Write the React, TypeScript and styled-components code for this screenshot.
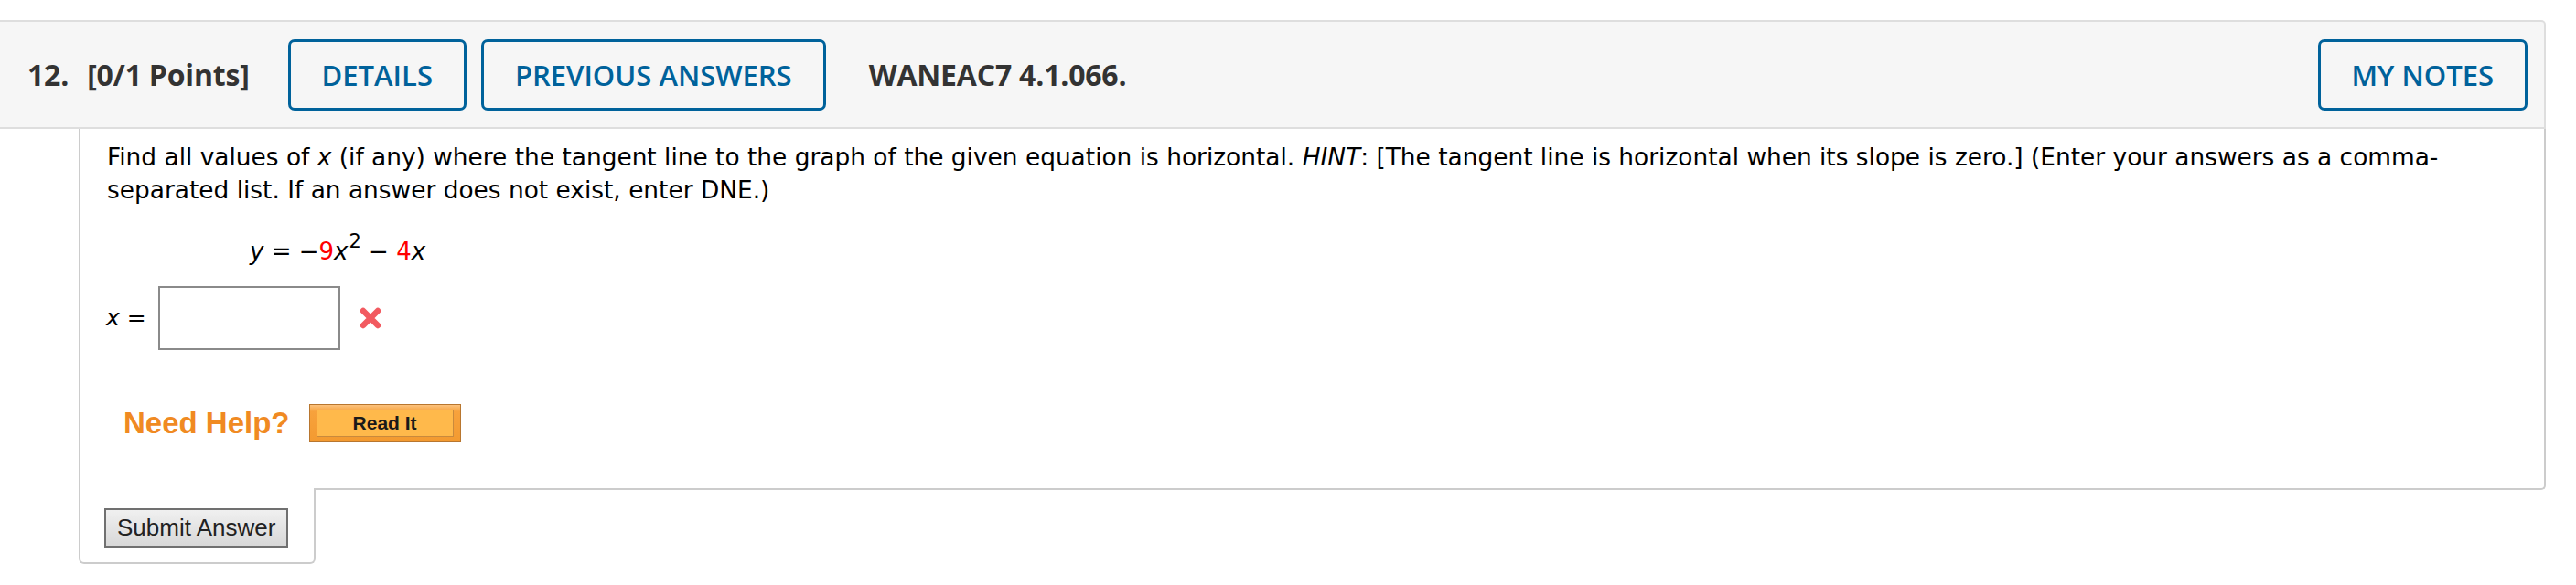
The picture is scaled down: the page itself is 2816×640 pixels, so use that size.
import React from "react";
import styled, { createGlobalStyle } from "styled-components";

const Global = createGlobalStyle`
  html, body { margin: 0; padding: 0; background: #ffffff; }
  body { width: 2816px; }
  * { box-sizing: border-box; }
`;

const Page = styled.div`
  padding-top: 22px;
  width: 2816px;
`;

const Header = styled.div`
  display: flex;
  align-items: center;
  height: 119px;
  margin-right: 33px;
  padding: 0 18px 0 30px;
  background: #f6f6f6;
  border-top: 2px solid #dedede;
  border-bottom: 2px solid #dedede;
  border-right: 2px solid #dedede;
  border-top-right-radius: 5px;
  font-family: "Open Sans", "DejaVu Sans", sans-serif;
  color: #333333;
`;

const HeadText = styled.span<{ $ml?: number }>`
  font-size: 32px;
  font-weight: 700;
  margin-left: ${(p) => p.$ml ?? 0}px;
  letter-spacing: -0.2px;
  white-space: nowrap;
`;

const OutlineButton = styled.button<{ $ml?: number }>`
  height: 78px;
  margin-left: ${(p) => p.$ml ?? 0}px;
  padding: 0 34px;
  border: 3px solid #00629b;
  border-radius: 7px;
  background: transparent;
  color: #00629b;
  font-family: "Open Sans", "DejaVu Sans", sans-serif;
  font-size: 31px;
  font-weight: 600;
  white-space: nowrap;
  cursor: pointer;
`;

const Spacer = styled.div`
  flex: 1;
`;

const Body = styled.div`
  margin: 0 33px 0 86px;
  padding: 13px 60px 50px 29px;
  border: 2px solid #cccccc;
  border-top: none;
  border-bottom-right-radius: 5px;
  font-family: "DejaVu Sans", Verdana, sans-serif;
  font-size: 26.4px;
  line-height: 36px;
  color: #000000;
`;

const Prompt = styled.p`
  margin: 0;
`;

const Equation = styled.div`
  margin: 31px 0 0 156px;
  font-size: 26px;
  white-space: nowrap;
`;

const Red = styled.span`
  color: #ff0000;
`;

const Sup = styled.sup`
  font-size: 21px;
  line-height: 0;
  vertical-align: 13px;
  margin-left: 1px;
`;

const AnswerRow = styled.div`
  display: flex;
  align-items: center;
  height: 70px;
  margin-top: 20px;
`;

const AnswerLabel = styled.span`
  margin-left: -1px;
  font-size: 25px;
  white-space: nowrap;
`;

const AnswerInput = styled.input`
  width: 199px;
  height: 70px;
  margin-left: 13px;
  border: 2px solid #8a8a8a;
  background: #ffffff;
  font-family: "DejaVu Sans", sans-serif;
  font-size: 24px;
  padding: 0 8px;
`;

const WrongMark = styled.svg`
  width: 26px;
  height: 26px;
  margin-left: 20px;
  flex: none;
`;

const HelpRow = styled.div`
  display: flex;
  align-items: center;
  height: 42px;
  margin-top: 59px;
  padding-left: 18px;
`;

const HelpLabel = styled.span`
  font-family: "Liberation Sans", Arial, sans-serif;
  font-weight: 700;
  font-size: 33px;
  color: #f08a22;
  white-space: nowrap;
`;

const ReadIt = styled.button`
  display: flex;
  align-items: center;
  justify-content: center;
  width: 166px;
  height: 42px;
  margin-left: 21px;
  padding: 5px 7px;
  border: 1px solid #b8762f;
  background: linear-gradient(#fcc27e 0%, #f7a23c 18%, #f39a30 100%);
  cursor: pointer;
`;

const ReadItFace = styled.span`
  display: flex;
  align-items: center;
  justify-content: center;
  width: 100%;
  height: 100%;
  border: 1px solid #c98a3d;
  background: #ffb94b;
  font-family: "Liberation Sans", Arial, sans-serif;
  font-weight: 700;
  font-size: 21px;
  color: #1a1a1a;
`;

const SubmitTab = styled.div`
  width: 259px;
  margin: -2px 0 0 86px;
  padding: 22px 27px 16px 26px;
  background: #ffffff;
  border: 2px solid #cccccc;
  border-top: none;
  border-radius: 0 0 6px 6px;
`;

const SubmitButton = styled.button`
  height: 43px;
  padding: 0 12px;
  border: 2px solid #707070;
  background: linear-gradient(#f0f0f0, #d8d8d8);
  font-family: "Liberation Sans", Arial, sans-serif;
  font-size: 26px;
  color: #222222;
  white-space: nowrap;
  cursor: pointer;
`;

export default function App() {
  return (
    <Page>
      <Global />
      <Header>
        <HeadText>12.</HeadText>
        <HeadText $ml={20}>[0/1 Points]</HeadText>
        <OutlineButton $ml={42}>DETAILS</OutlineButton>
        <OutlineButton $ml={16}>PREVIOUS ANSWERS</OutlineButton>
        <HeadText $ml={47}>WANEAC7 4.1.066.</HeadText>
        <Spacer />
        <OutlineButton>MY NOTES</OutlineButton>
      </Header>
      <Body>
        <Prompt>
          Find all values of <i>x</i> (if any) where the tangent line to the graph of the given
          equation is horizontal. <i>HINT</i>: [The tangent line is horizontal when its slope is
          zero.] (Enter your answers as a comma-separated list. If an answer does not exist, enter
          DNE.)
        </Prompt>
        <Equation>
          <i>y</i> = −<Red>9</Red>
          <i>x</i>
          <Sup>2</Sup> − <Red>4</Red>
          <i>x</i>
        </Equation>
        <AnswerRow>
          <AnswerLabel>
            <i>x</i> =
          </AnswerLabel>
          <AnswerInput type="text" aria-label="x" />
          <WrongMark viewBox="0 0 26 26" aria-label="incorrect">
            <path
              d="M5 5 L21 21 M21 5 L5 21"
              stroke="#f25a60"
              strokeWidth="6.5"
              strokeLinecap="round"
              fill="none"
            />
          </WrongMark>
        </AnswerRow>
        <HelpRow>
          <HelpLabel>Need Help?</HelpLabel>
          <ReadIt>
            <ReadItFace>Read It</ReadItFace>
          </ReadIt>
        </HelpRow>
      </Body>
      <SubmitTab>
        <SubmitButton>Submit Answer</SubmitButton>
      </SubmitTab>
    </Page>
  );
}
